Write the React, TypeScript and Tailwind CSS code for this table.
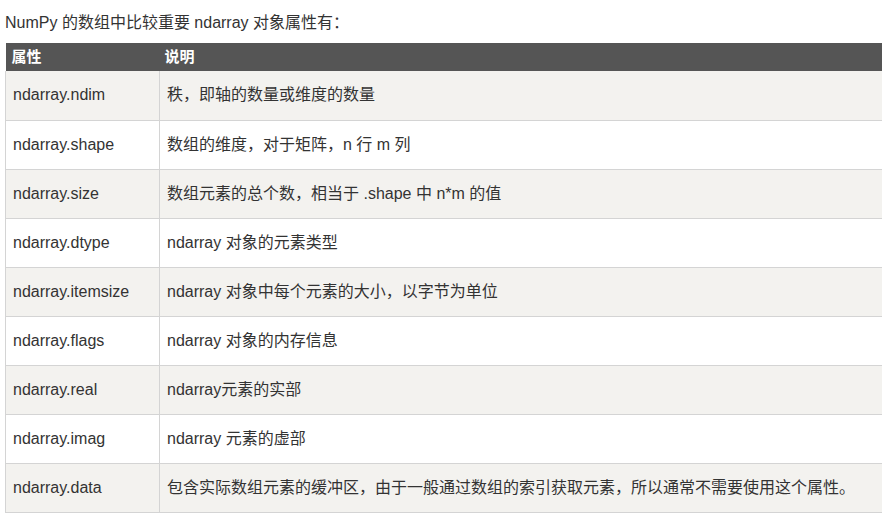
const rows: [string, string][] = [
  ["ndarray.ndim", "秩，即轴的数量或维度的数量"],
  ["ndarray.shape", "数组的维度，对于矩阵，n 行 m 列"],
  ["ndarray.size", "数组元素的总个数，相当于 .shape 中 n*m 的值"],
  ["ndarray.dtype", "ndarray 对象的元素类型"],
  ["ndarray.itemsize", "ndarray 对象中每个元素的大小，以字节为单位"],
  ["ndarray.flags", "ndarray 对象的内存信息"],
  ["ndarray.real", "ndarray元素的实部"],
  ["ndarray.imag", "ndarray 元素的虚部"],
  ["ndarray.data", "包含实际数组元素的缓冲区，由于一般通过数组的索引获取元素，所以通常不需要使用这个属性。"],
];

export default function App() {
  return (
    <div className="h-[521px] w-[882px] overflow-hidden bg-white pl-[5px] font-['Liberation_Sans','Noto_Sans_CJK_SC',sans-serif] text-[#333]">
      <p className="flex h-[43px] items-center pt-[3px] text-[16px]">NumPy 的数组中比较重要 ndarray 对象属性有：</p>
      <table className="w-[900px] border-collapse text-left">
        <thead>
          <tr className="h-[28px] bg-[#555555] text-[15px] font-bold text-white">
            <th className="w-[154px] py-0 pr-2 pl-[6px]">属性</th>
            <th className="py-0 pr-2 pl-[5px]">说明</th>
          </tr>
        </thead>
        <tbody className="text-[16px]">
          {rows.map(([name, desc], i) => (
            <tr key={name} className={i % 2 === 0 ? "h-[49px] bg-[#f3f2ef]" : "h-[49px] bg-white"}>
              <td className="border-b border-l border-[#d4d4d4] py-0 pr-2 pl-[7px]">{name}</td>
              <td className="border-b border-l border-[#d4d4d4] py-0 pr-2 pl-[7px]">{desc}</td>
            </tr>
          ))}
        </tbody>
      </table>
    </div>
  );
}
